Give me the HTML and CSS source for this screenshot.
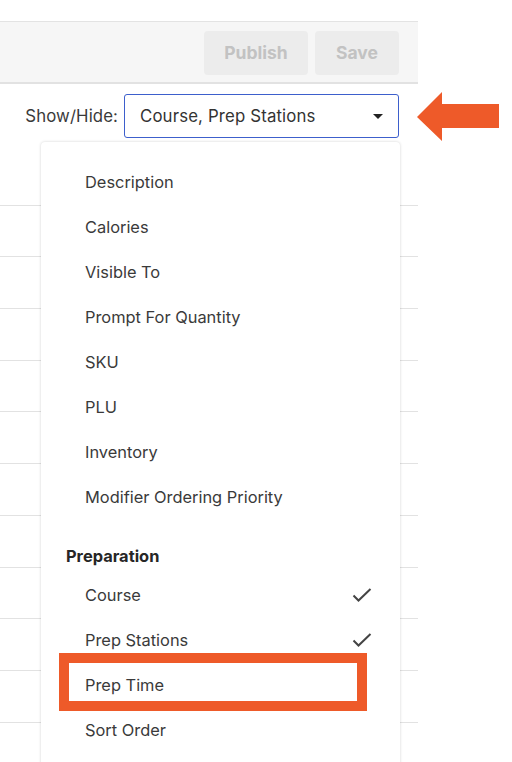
FILE: index.html
```html
<!DOCTYPE html>
<html>
<head>
<meta charset="utf-8">
<link rel="stylesheet" href="styles.css">
</head>
<body>
<div class="page">
  <div class="topspace"></div>
  <div class="toolbar">
    <button class="btn btn-publish">Publish</button>
    <button class="btn btn-save">Save</button>
  </div>
  <div class="filter-row">
    <span class="filter-label">Show/Hide:</span>
    <div class="select">
      <span class="select-value">Course, Prep Stations</span>
      <span class="caret"></span>
    </div>
  </div>
  <div class="table">
    <div class="row"></div><div class="row"></div><div class="row"></div>
    <div class="row"></div><div class="row"></div><div class="row"></div>
    <div class="row"></div><div class="row"></div><div class="row"></div>
    <div class="row"></div><div class="row"></div>
  </div>

  <div class="menu">
    <div class="item">Description</div>
    <div class="item">Calories</div>
    <div class="item">Visible To</div>
    <div class="item">Prompt For Quantity</div>
    <div class="item">SKU</div>
    <div class="item">PLU</div>
    <div class="item">Inventory</div>
    <div class="item">Modifier Ordering Priority</div>
    <div class="group-title">Preparation</div>
    <div class="item checked">Course
      <svg class="check" viewBox="0 0 20 14" width="20" height="14"><path d="M1.5 7.5 L6.5 12.5 L18.5 1" fill="none" stroke="#444" stroke-width="2"/></svg>
    </div>
    <div class="item checked">Prep Stations
      <svg class="check" viewBox="0 0 20 14" width="20" height="14"><path d="M1.5 7.5 L6.5 12.5 L18.5 1" fill="none" stroke="#444" stroke-width="2"/></svg>
    </div>
    <div class="item">Prep Time</div>
    <div class="item">Sort Order</div>
    <div class="highlight"></div>
  </div>

  <svg class="arrow" viewBox="0 0 82 50" width="82" height="50">
    <polygon points="0,25 25,0 25,12 82,12 82,36 25,36 25,49" fill="#ee5a29"/>
  </svg>
</div>
</body>
</html>
```
FILE: styles.css
```css
html, body {
  margin: 0;
  padding: 0;
  background: #ffffff;
}
body {
  font-family: Inter, "Liberation Sans", sans-serif;
  color: #3a3a3a;
}
.page {
  position: relative;
  width: 512px;
  height: 762px;
  overflow: hidden;
}
.topspace {
  height: 21px;
}
.toolbar {
  width: 418px;
  height: 63px;
  box-sizing: border-box;
  background: #f6f6f6;
  border-top: 1px solid #e3e3e3;
  border-bottom: 2px solid #e2e2e2;
  display: flex;
  justify-content: flex-end;
  align-items: center;
  gap: 7px;
  padding-right: 19px;
}
.btn {
  height: 44px;
  border: none;
  border-radius: 4px;
  background: #ececec;
  color: #c2c2c2;
  font-family: Inter, "Liberation Sans", sans-serif;
  font-weight: 700;
  font-size: 17.5px;
  padding: 0;
  margin-top: 1px;
}
.btn-publish { width: 104px; }
.btn-save { width: 84px; }
.filter-row {
  width: 418px;
  box-sizing: border-box;
  padding-right: 19px;
  margin-top: 10px;
  display: flex;
  justify-content: flex-end;
  align-items: center;
  gap: 6px;
}
.filter-label {
  font-size: 16.8px;
  letter-spacing: 0.1px;
  color: #3a3a3a;
}
.select {
  width: 275px;
  height: 44px;
  box-sizing: border-box;
  border: 1.5px solid #3d5fcc;
  border-radius: 3px;
  display: flex;
  align-items: center;
  justify-content: space-between;
  padding: 0 15px 0 15px;
}
.select-value {
  font-size: 16.8px;
  letter-spacing: 0.15px;
  color: #333;
}
.caret {
  width: 0;
  height: 0;
  border-left: 5px solid transparent;
  border-right: 5px solid transparent;
  border-top: 5px solid #222;
}
.table {
  width: 418px;
  margin-top: 16px;
}
.row {
  height: 51.7px;
  box-sizing: border-box;
  border-bottom: 1px solid #e2e2e2;
}
.menu {
  position: absolute;
  left: 41px;
  top: 142px;
  width: 359px;
  height: 660px;
  box-sizing: border-box;
  background: #fff;
  border-radius: 4px;
  box-shadow: 0 0 3px rgba(0,0,0,0.18);
  padding-top: 17.5px;
}
.item {
  height: 45px;
  display: flex;
  align-items: center;
  justify-content: space-between;
  padding: 0 28px 0 44px;
  font-size: 16.4px;
  color: #3a3a3a;
}
.group-title {
  margin-top: 19px;
  height: 34px;
  display: flex;
  align-items: center;
  padding-left: 25px;
  font-size: 16.4px;
  font-weight: 700;
  color: #262626;
}
.check {
  display: block;
}
.highlight {
  position: absolute;
  left: 18px;
  top: 511px;
  width: 308px;
  height: 58px;
  box-sizing: border-box;
  border: 10px solid #ee5a29;
}
.arrow {
  position: absolute;
  left: 417px;
  top: 92px;
}
```
